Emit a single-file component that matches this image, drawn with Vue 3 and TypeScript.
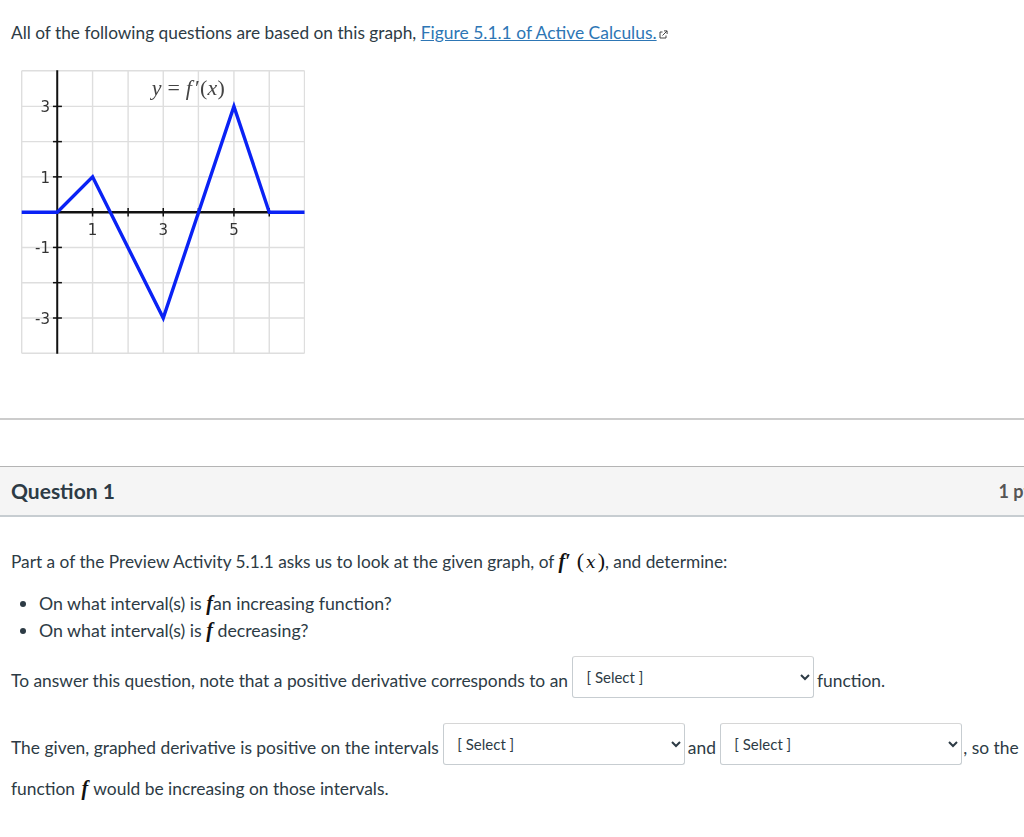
<script setup lang="ts">
const xLines = [21.7, 57.3, 92.7, 128.3, 163.5, 198.7, 234.3, 269.7, 305]
const yLines = [70, 105.7, 141, 176.3, 211.7, 247, 282.3, 317.7, 353]
const xTicks = [92.7, 128.3, 163.5, 198.7, 234.3, 269.7]
const yTicks = [105.7, 141, 176.3, 247, 282.3, 317.7]
const xLabels = [
  { t: '1', x: 92.7 },
  { t: '3', x: 163.5 },
  { t: '5', x: 234.3 },
]
const yLabels = [
  { t: '3', y: 111.5 },
  { t: '1', y: 182 },
  { t: '-1', y: 253 },
  { t: '-3', y: 323.5 },
]
const curve = '21.7,211.7 57.3,211.7 92.7,176.3 163.5,317.7 234.3,105.7 269.7,211.7 305,211.7'
const options = ['[ Select ]', 'increasing', 'decreasing']
</script>

<template>
  <div class="page">
    <p class="intro">
      All of the following questions are based on this graph,
      <a href="#" class="link">Figure 5.1.1 of Active Calculus.</a>
      <svg class="ext" width="9" height="9" viewBox="0 0 9 9" fill="none" stroke="#444" stroke-width="1">
        <path d="M3.5 2H1v6h6V5.5" />
        <path d="M3.5 5.5 8 1M5 .9h3.1V4" />
      </svg>
    </p>

    <svg class="graph" width="284" height="285" viewBox="21 69.5 284.5 285">
      <rect x="21.7" y="70" width="283.3" height="283" fill="#fff" />
      <g stroke="#dedede" stroke-width="1.4">
        <line v-for="x in xLines" :key="'gx' + x" :x1="x" :x2="x" y1="70" y2="353" />
        <line v-for="y in yLines" :key="'gy' + y" x1="21.7" x2="305" :y1="y" :y2="y" />
      </g>
      <g stroke="#111" stroke-width="2">
        <line x1="57.3" x2="57.3" y1="69.5" y2="353.5" />
        <line x1="57.3" x2="270" y1="211.7" y2="211.7" stroke-width="2.6" />
        <line v-for="x in xTicks" :key="'tx' + x" :x1="x" :x2="x" y1="207.5" y2="216" stroke-width="1.5" />
        <line v-for="y in yTicks" :key="'ty' + y" x1="53" x2="62" :y1="y" :y2="y" stroke-width="1.5" />
      </g>
      <polyline :points="curve" fill="none" stroke="#0a22f5" stroke-width="3.4" stroke-linejoin="miter" />
      <text v-for="l in xLabels" :key="'lx' + l.t" :x="l.x" y="234.5" class="num" text-anchor="middle">{{ l.t }}</text>
      <text v-for="l in yLabels" :key="'ly' + l.t" x="50" :y="l.y" class="num" text-anchor="end">{{ l.t }}</text>
      <text x="152" y="94.5" class="fn"><tspan font-style="italic">y</tspan> = <tspan font-style="italic">f</tspan><tspan dx="3">′</tspan>(<tspan font-style="italic">x</tspan>)</text>
    </svg>

    <hr class="rule" />

    <header class="q-head">
      <h2>Question 1</h2>
      <span class="pts">1 pts</span>
    </header>

    <div class="q-body">
      <p class="lead">
        Part a of the Preview Activity 5.1.1 asks us to look at the given graph, of
        <span class="math"><i class="mprime">f′</i><span class="paren">(</span><i class="mx">x</i><span class="paren">)</span></span>, and determine:
      </p>
      <ul>
        <li>On what interval(s) is <i class="mf">f</i>an increasing function?</li>
        <li>On what interval(s) is <i class="mf">f</i> decreasing?</li>
      </ul>
      <p class="answer first">
        To answer this question, note that a positive derivative corresponds to an
        <select><option v-for="o in options" :key="o">{{ o }}</option></select>
        function.
      </p>
      <p class="answer">
        The given, graphed derivative is positive on the intervals
        <select><option v-for="o in options" :key="o">{{ o }}</option></select>
        and
        <select class="last"><option v-for="o in options" :key="o">{{ o }}</option></select>, so the function <i class="mf gap">f</i> would be increasing on those intervals.
      </p>
    </div>
  </div>
</template>

<style>
html, body {
  margin: 0;
  background: #fff;
  overflow: hidden;
}
</style>

<style scoped>
.page {
  width: 1024px;
  height: 837px;
  overflow: hidden;
  font-family: Lato, "Liberation Sans", sans-serif;
  font-size: 17.3px;
  line-height: 24px;
  color: #2d3b45;
}

.intro {
  margin: 0;
  padding: 21px 11px 0;
}

.link {
  font-size: 17.45px;
  color: #2d76b5;
  text-decoration: underline;
}

.ext {
  margin-left: 2px;
}

.graph {
  display: block;
  margin: 25px 0 0 21px;
  filter: blur(0.4px);
}

.num {
  font-family: "DejaVu Sans", sans-serif;
  font-size: 15px;
  fill: #333;
}

.fn {
  font-family: "Liberation Serif", serif;
  font-size: 22px;
  letter-spacing: 0.2px;
  fill: #444;
}

.rule {
  margin: 63px 0 0;
  border: 0;
  border-top: 2px solid #ccc;
}

.q-head {
  width: 1049px;
  height: 51px;
  margin-top: 46px;
  box-sizing: border-box;
  padding: 0 11px;
  display: flex;
  align-items: center;
  justify-content: space-between;
  background: #f5f5f5;
  border-top: 1px solid #b4b4b4;
  border-bottom: 2px solid #c7cdd1;
}

.q-head h2 {
  margin: 0;
  font-size: 21px;
  font-weight: 700;
  color: #2d3b45;
}

.pts {
  font-size: 18px;
  font-weight: 700;
  color: #555;
}

.q-body {
  padding: 0 0 0 11px;
  width: 1013px;
}

.lead {
  margin: 32px 0 0;
}

.math {
  font-family: "Liberation Serif", serif;
  color: #111;
}

.mprime {
  font-size: 20px;
  font-weight: 700;
  margin-right: 6px;
}

.paren {
  font-size: 22px;
}

.mx {
  font-family: "DejaVu Serif", serif;
  font-size: 17px;
  margin: 0 2px;
}

.mf {
  font-family: "Liberation Serif", serif;
  font-size: 20px;
  font-weight: 700;
  color: #111;
}

.mf.gap {
  margin: 0 1px 0 2px;
}

ul {
  margin: 15px 0 0;
  padding-left: 28px;
  font-size: 17.75px;
  line-height: 27px;
}

.answer {
  margin: 22px 0 0;
  line-height: 41px;
  font-size: 17.4px;
}

.answer.first {
  margin-top: 12px;
}

select {
  width: 242px;
  height: 42px;
  margin: 0 -2px 0 0;
  padding: 0 9px;
  box-sizing: border-box;
  font-family: Lato, "Liberation Sans", sans-serif;
  font-size: 15px;
  color: #2d3b45;
  background: #fff;
  border: 1px solid #c7cdd1;
  border-top-color: #d6d6d6;
  border-radius: 3px;
  vertical-align: 4px;
}

select.last {
  margin-right: 1px;
}
</style>
